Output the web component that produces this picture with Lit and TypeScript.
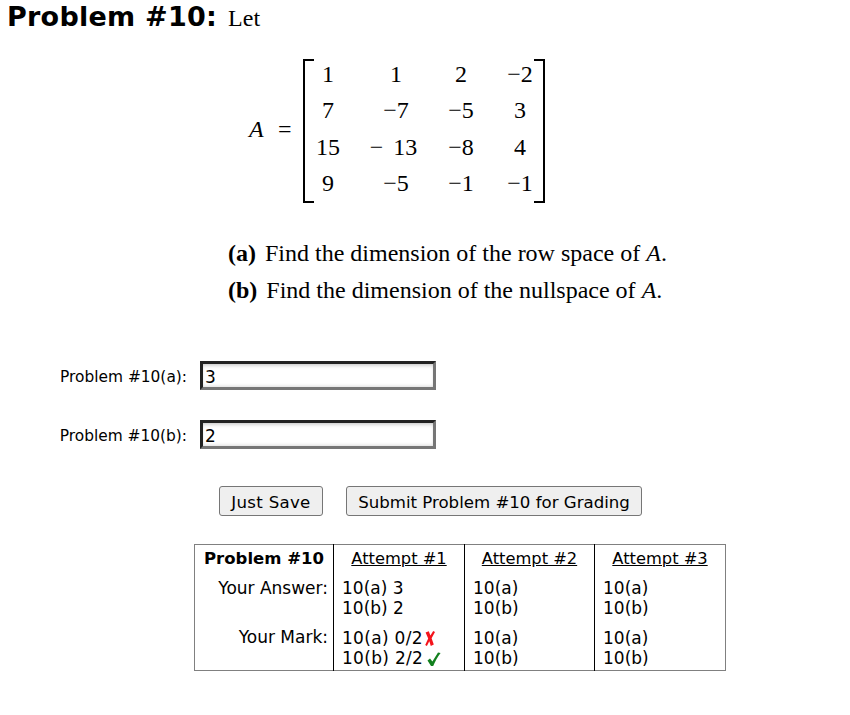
import { LitElement, html, css } from "lit";
import { customElement } from "lit/decorators.js";
import { classMap } from "lit/directives/class-map.js";

const M = [
  ["1", "1", "2", "−2"],
  ["7", "−7", "−5", "3"],
  ["15", "− 13", "−8", "4"],
  ["9", "−5", "−1", "−1"],
];

@customElement("app-root")
export class AppRoot extends LitElement {
  static styles = css`
    :host { display: block; width: 850px; height: 715px; overflow: hidden; background: #fff; color: #000;
      font-family: "DejaVu Sans", Verdana, sans-serif; font-size: 16px; }
    .head { display: flex; align-items: baseline; padding: 1px 0 0 7px; height: 32px; }
    h1 { margin: 0; font-size: 27px; line-height: 31px; font-weight: 700; letter-spacing: 0.25px; white-space: nowrap; }
    .let { font-family: "Liberation Serif", serif; font-size: 24px; margin-left: 11px; }
    .eq { display: flex; align-items: center; margin: 26px 0 0 249px; height: 144px; font-family: "Liberation Serif", serif; font-size: 24px; }
    .eq i { width: 29px; margin-bottom: 4px; }
    .eq .is { width: 25px; margin-bottom: 4px; }
    .matrix { position: relative; width: 242px; height: 144px; }
    .matrix::before, .matrix::after { content: ""; position: absolute; top: 0; bottom: 0; width: 9px; border: 2px solid #000; }
    .matrix::before { left: 0; border-right: 0; }
    .matrix::after { right: 0; border-left: 0; }
    .cells { display: grid; grid-template-columns: 66px 70px 60px 58px; grid-auto-rows: 36.4px; margin: -3px 0 0 -8px; width: 254px; word-spacing: 4px; }
    .cells span { text-align: center; line-height: 36.4px; }
    .cells span.wide { margin-left: -5px; }
    .parts { margin: 32px 0 0 228px; font-family: "Liberation Serif", serif; font-size: 24px; line-height: 37px; }
    .parts div { white-space: nowrap; }
    .parts b { margin-right: 3px; }
    .fields { margin-top: 52px; display: flex; flex-direction: column; gap: 30px; }
    .field { display: flex; align-items: center; height: 29px; }
    label { width: 187px; text-align: right; font-size: 15.4px; white-space: nowrap; padding-top: 2px; }
    input { box-sizing: border-box; width: 236px; height: 29px; margin: 0 0 0 13px; padding: 3px 2px 0 2px;
      font: 17px "DejaVu Sans", Verdana, sans-serif; color: #000; background: #fff;
      border: 3px solid; border-color: #222 #767676 #767676 #222; outline: none; border-radius: 0;
      box-shadow: inset 0 3px 4px -2px #bbb, inset 0 -3px 4px -3px #ccc; }
    .buttons { display: flex; gap: 23px; margin: 37px 0 0 219px; }
    button { height: 30px; padding: 2px 0 0; font: 16.6px "DejaVu Sans", Verdana, sans-serif; color: #000; white-space: nowrap;
      background: #efefef; border: 1px solid #767676; border-radius: 3px; }
    .save { width: 104px; letter-spacing: 0.3px; }
    .submit { width: 296px; }
    table { border-collapse: collapse; margin: 28px 0 0 194px; width: 531px; table-layout: fixed; font-size: 17px;
      border: 1px solid #808080; }
    td, th { padding: 0; vertical-align: top; font-weight: 400; }
    tr > *:not(:last-child) { border-right: 1px solid #000; }
    col.c0 { width: 139px; } col.c1 { width: 131px; } col.c2 { width: 130px; } col.c3 { width: 131px; }
    .title { font-weight: 700; text-align: center; font-size: 16.5px; line-height: 27px; height: 27px; white-space: nowrap; }
    .attempt { text-align: center; text-decoration: underline; line-height: 27px; font-size: 16.3px; }
    .lbl { text-align: right; padding-right: 5px; line-height: 20px; white-space: nowrap; }
    .val { padding-left: 8px; line-height: 20px; white-space: nowrap; }
    .r1 td { padding-top: 6px; }
    .r2 td { padding-top: 10px; padding-bottom: 2px; }
    .r2 .val div { height: 20px; display: flex; align-items: center; }
    .r2 .lbl { padding-top: 9px; }
    .score { letter-spacing: 0.3px; }
    svg { display: block; flex: none; }
    .cross { margin-left: 2px; }
    .check { margin: 2px 0 0 4px; }
  `;

  render() {
    const cross = html`<svg class="cross" width="10" height="15" viewBox="0 0 10 15"><path d="M0.6 1.4 L3.8 0.2 L5.4 4.6 L8.2 0 L10 1 L6.6 7.2 L8.8 13.4 L5.8 15 L4.3 10.2 L1.9 15 L0.2 14 L3.2 7.6 Z" fill="#f4141c"/></svg>`;
    const check = html`<svg class="check" width="14" height="14" viewBox="0 0 14 14"><path d="M0.5 8.4 L3 6.6 L5.4 9.4 L11 0.4 L13.6 1 C10.6 5 8 9.6 6.2 14 L4 14 Z" fill="#12801e"/></svg>`;
    return html`
      <div class="head"><h1>Problem #10:</h1><span class="let">Let</span></div>
      <div class="eq">
        <i>A</i><span class="is">=</span>
        <div class="matrix"><div class="cells">${M.flat().map((v) => html`<span class=${classMap({ wide: v.includes(" ") })}>${v}</span>`)}</div></div>
      </div>
      <div class="parts">
        <div><b>(a)</b> Find the dimension of the row space of <i>A</i>.</div>
        <div><b>(b)</b> Find the dimension of the nullspace of <i>A</i>.</div>
      </div>
      <div class="fields">
        <div class="field"><label>Problem #10(a):</label><input value="3" /></div>
        <div class="field"><label>Problem #10(b):</label><input value="2" /></div>
      </div>
      <div class="buttons"><button class="save">Just Save</button><button class="submit">Submit Problem #10 for Grading</button></div>
      <table>
        <colgroup><col class="c0" /><col class="c1" /><col class="c2" /><col class="c3" /></colgroup>
        <tr>
          <th class="title">Problem #10</th>
          <th class="attempt">Attempt #1</th><th class="attempt">Attempt #2</th><th class="attempt">Attempt #3</th>
        </tr>
        <tr class="r1">
          <td class="lbl">Your Answer:</td>
          <td class="val"><div>10(a) 3</div><div>10(b) 2</div></td>
          <td class="val"><div>10(a)</div><div>10(b)</div></td>
          <td class="val"><div>10(a)</div><div>10(b)</div></td>
        </tr>
        <tr class="r2">
          <td class="lbl">Your Mark:</td>
          <td class="val"><div><span class="score">10(a) 0/2</span>${cross}</div><div><span class="score">10(b) 2/2</span>${check}</div></td>
          <td class="val"><div>10(a)</div><div>10(b)</div></td>
          <td class="val"><div>10(a)</div><div>10(b)</div></td>
        </tr>
      </table>
    `;
  }
}
